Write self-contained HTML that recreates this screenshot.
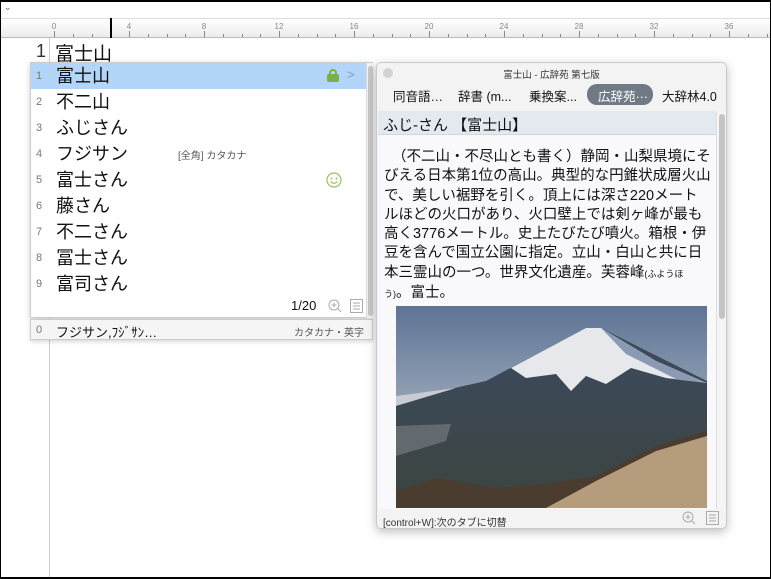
<!DOCTYPE html>
<html><head><meta charset="utf-8"><style>
*{margin:0;padding:0;box-sizing:border-box}
body{width:771px;height:579px;overflow:hidden;background:#fff;font-family:"Liberation Sans","Noto Sans CJK JP",sans-serif;position:relative}
.frame{position:absolute;left:0;top:0;width:771px;height:579px;border:1px solid #000;border-top:2px solid #000;border-bottom:2px solid #000}
.ruler{position:absolute;left:1px;top:18px;width:769px;height:20px;background:linear-gradient(#fff,#ececec);border-top:1px solid #ddd;border-bottom:1px solid #bbb}
.rl{position:absolute;top:3px;font-size:8px;color:#888;transform:translateX(-50%)}
.tk{position:absolute;bottom:0;width:1px;height:3px;background:#888}
.tk.b{height:6px}
.gut{position:absolute;left:49px;top:38px;width:1px;height:540px;background:#ccc}
.ln{position:absolute;left:36px;top:41px;font-size:18px;color:#333}
.edit{position:absolute;left:55px;top:39px;font-size:19px;color:#111}
.cand{position:absolute;left:30px;top:62px;width:343px;height:256px;background:#fff;border:1px solid #ccc;box-shadow:0 2px 6px rgba(0,0,0,.2)}
.row{position:absolute;left:0;width:336px;height:26px}
.row .n{position:absolute;left:5px;top:7px;font-size:11px;color:#777}
.row .w{position:absolute;left:25px;top:-1px;font-size:18px;color:#111}
.sel{background:#b3d5f9}
.cscroll{position:absolute;left:335px;top:0;width:7px;height:255px;background:#f2f2f2;border-left:1px solid #ddd}
.cscroll i{position:absolute;left:1px;top:3px;width:5px;height:250px;background:#c8c8c8;border-radius:3px}
.bot{position:absolute;left:30px;top:319px;width:343px;height:21px;background:#f5f5f5;border:1px solid #ccc;box-shadow:0 2px 4px rgba(0,0,0,.15)}
.dict{position:absolute;left:376px;top:62px;width:351px;height:467px;background:#f3f3f3;border:1px solid #c9c9c9;border-radius:5px;box-shadow:0 3px 10px rgba(0,0,0,.25);overflow:hidden}
.tab{position:absolute;top:23px;font-size:12.5px;color:#111}
.hd{position:absolute;left:1px;top:48px;width:338px;height:24px;background:#e4e9f0;border-bottom:1px solid #cfd6df;font-size:15px;padding:3px 5px;color:#111}
.body{position:absolute;left:1px;top:72px;width:338px;height:374px;background:#f9f9fb}
.txt{position:absolute;left:6px;top:13px;font-size:14.5px;line-height:19.3px;color:#111;white-space:nowrap}
.dscroll{position:absolute;left:339px;top:48px;width:11px;height:398px;background:#f5f5f5;border-left:1px solid #e0e0e0}
.dscroll i{position:absolute;left:2px;top:3px;width:6px;height:205px;background:#c4c4c4;border-radius:3px}
</style></head><body>
<div style="position:absolute;left:4px;top:2px;font-size:9px;color:#666">⌄</div>
<div class="ruler" id="r"></div>
<div class="gut"></div>
<div class="ln">1</div>
<div class="edit">富士山</div>
<div style="position:absolute;left:110px;top:18px;width:2px;height:20px;background:#000"></div>

<div class="cand">
 <div class="row sel" style="top:0"><span class="n">1</span><span class="w">富士山</span>
  <svg style="position:absolute;left:295px;top:6px" width="14" height="13"><path d="M4 6V4a3 3 0 0 1 6 0v2" stroke="#7bb042" stroke-width="2" fill="none"/><rect x="1" y="5" width="12" height="8" rx="2" fill="#7bb042"/></svg>
  <span style="position:absolute;left:316px;top:4px;font-size:13px;color:#8a9ab0">&gt;</span></div>
 <div class="row" style="top:26px"><span class="n">2</span><span class="w">不二山</span></div>
 <div class="row" style="top:52px"><span class="n">3</span><span class="w">ふじさん</span></div>
 <div class="row" style="top:78px"><span class="n">4</span><span class="w">フジサン</span><span style="position:absolute;left:147px;top:6px;font-size:10px;color:#555">[全角] カタカナ</span></div>
 <div class="row" style="top:104px"><span class="n">5</span><span class="w">富士さん</span>
  <svg style="position:absolute;left:295px;top:5px" width="16" height="16"><circle cx="8" cy="8" r="7" fill="none" stroke="#9cc060" stroke-width="1.2"/><circle cx="5.5" cy="6.5" r="1" fill="#9cc060"/><circle cx="10.5" cy="6.5" r="1" fill="#9cc060"/><path d="M4.5 9.5q3.5 3.5 7 0" stroke="#9cc060" fill="none" stroke-width="1.2"/></svg></div>
 <div class="row" style="top:130px"><span class="n">6</span><span class="w">藤さん</span></div>
 <div class="row" style="top:156px"><span class="n">7</span><span class="w">不二さん</span></div>
 <div class="row" style="top:182px"><span class="n">8</span><span class="w">冨士さん</span></div>
 <div class="row" style="top:208px"><span class="n">9</span><span class="w">富司さん</span></div>
 <span style="position:absolute;left:260px;top:235px;font-size:13px;color:#111">1/20</span>
 <svg style="position:absolute;left:297px;top:236px" width="14" height="14"><circle cx="6" cy="6" r="5" fill="none" stroke="#aaa"/><path d="M6 3.5v5M3.5 6h5M10 10l3 3" stroke="#aaa"/></svg>
 <svg style="position:absolute;left:319px;top:236px" width="13" height="14"><rect x=".5" y=".5" width="12" height="13" fill="none" stroke="#aaa"/><path d="M3 4h7M3 7h7M3 10h7" stroke="#aaa"/></svg>
 <div class="cscroll"><i></i></div>
</div>
<div class="bot"><span style="position:absolute;left:5px;top:4px;font-size:11px;color:#777">0</span><span style="position:absolute;left:25px;top:2px;font-size:13px;color:#111">フジサン,ﾌｼﾞｻﾝ…</span><span style="position:absolute;right:8px;top:4px;font-size:10px;color:#555">カタカナ・英字</span></div>

<div class="dict">
 <div style="position:absolute;left:6px;top:5px;width:10px;height:10px;border-radius:50%;background:#d2d2d2"></div>
 <div style="position:absolute;left:0;width:100%;top:4px;text-align:center;font-size:9.5px;color:#333">富士山 - 広辞苑 第七版</div>
 <span class="tab" style="left:16px">同音語…</span>
 <span class="tab" style="left:81px">辞書 (m...</span>
 <span class="tab" style="left:152px">乗換案...</span>
 <div style="position:absolute;left:210px;top:21px;width:66px;height:21px;border-radius:10px;background:#6f7a85"></div>
 <span class="tab" style="left:221px;color:#fff">広辞苑···</span>
 <span class="tab" style="left:285px">大辞林4.0</span>
 <div class="hd">ふじ-さん 【富士山】</div>
 <div class="body">
  <div class="txt">&nbsp;&nbsp;（不二山・不尽山とも書く）静岡・山梨県境にそ<br>びえる日本第1位の高山。典型的な円錐状成層火山<br>で、美しい裾野を引く。頂上には深さ220メート<br>ルほどの火口があり、火口壁上では剣ヶ峰が最も<br>高く3776メートル。史上たびたび噴火。箱根・伊<br>豆を含んで国立公園に指定。立山・白山と共に日<br>本三霊山の一つ。世界文化遺産。芙蓉峰<span style="font-size:9px">(ふようほ</span><br><span style="font-size:9px">う)</span>。富士。</div>
  <svg style="position:absolute;left:18px;top:171px" width="311" height="202" viewBox="0 0 311 202">
   <defs><linearGradient id="sk" x1="0" y1="0" x2="0" y2="1"><stop offset="0" stop-color="#5d7495"/><stop offset=".6" stop-color="#a2adbd"/><stop offset="1" stop-color="#c9c7c8"/></linearGradient>
   <linearGradient id="gr" x1="0" y1="0" x2="0" y2="1"><stop offset="0" stop-color="#3d4a5e"/><stop offset="1" stop-color="#3b4540"/></linearGradient></defs>
   <rect width="311" height="202" fill="url(#sk)"/>
   <path d="M0 95 L90 75 L190 22 L205 22 L311 75 L311 202 L0 202Z" fill="url(#gr)"/>
   <path d="M0 90 L60 82 L0 100Z" fill="#c8ccd2"/>
   <path d="M115 62 L190 22 L205 22 L260 55 L311 77 L270 72 L235 62 L210 78 L190 70 L175 85 L160 68 L130 72Z" fill="#e6e8ec"/>
   <path d="M205 22 L260 55 L311 77 L280 73 L230 48Z" fill="#8a9ab4"/>
   <path d="M0 185 L40 172 L100 182 L150 178 L200 170 L260 140 L311 125 L311 202 L0 202Z" fill="#4a3c2e"/>
   <path d="M150 202 L200 175 L260 145 L311 130 L311 202Z" fill="#b59c7d"/>
   <path d="M0 120 L55 118 L50 135 L0 150Z" fill="#7d8287" opacity=".6"/>
  </svg>
 </div>
 <div class="dscroll"><i></i></div>
 <span style="position:absolute;left:6px;top:451px;font-size:10px;color:#333">[control+W]:次のタブに切替</span>
 <svg style="position:absolute;left:305px;top:448px" width="14" height="14"><circle cx="6" cy="6" r="5" fill="none" stroke="#aaa"/><path d="M6 3.5v5M3.5 6h5M10 10l3 3" stroke="#aaa"/></svg>
 <svg style="position:absolute;left:329px;top:448px" width="13" height="14"><rect x=".5" y=".5" width="12" height="13" fill="none" stroke="#aaa"/><path d="M3 4h7M3 7h7M3 10h7" stroke="#aaa"/></svg>
</div>
<div class="frame"></div>
<script>
var r=document.getElementById('r'),h='';
for(var i=0;i<=38;i++){var x=53+i*18.75;h+='<div class="tk'+(i%4==0?' b':'')+'" style="left:'+x+'px"></div>';if(i%4==0)h+='<div class="rl" style="left:'+x+'px">'+i+'</div>';}
r.innerHTML=h;
</script>
</body></html>
